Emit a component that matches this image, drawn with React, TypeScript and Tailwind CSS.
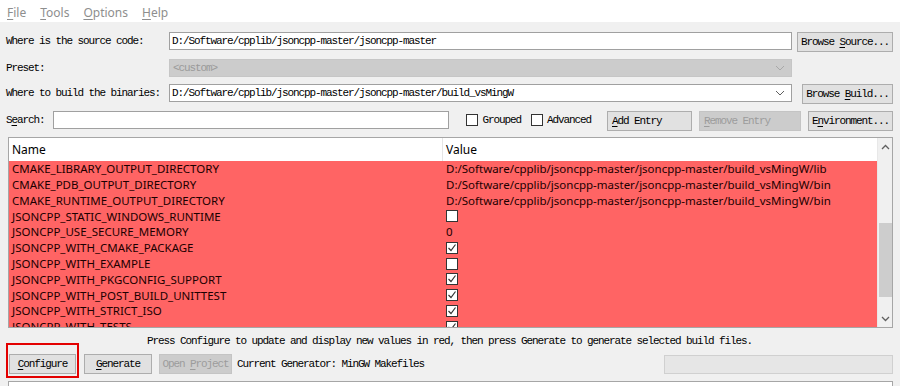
import React from "react";

const mono = "font-['Liberation_Mono',monospace] text-[11px] tracking-[-1.1px] text-black";
const ui = "font-['Noto_Sans',sans-serif]";

function U({ children }: { children: React.ReactNode }) {
  return <span className="underline underline-offset-2">{children}</span>;
}

function Btn({ w, children, disabled, left }: { w: string; children: React.ReactNode; disabled?: boolean; left?: boolean }) {
  return (
    <div
      className={`${w} h-[20px] flex items-center ${left ? "justify-start pl-[4px]" : "justify-center"} border ${
        disabled ? "bg-[#cccccc] border-[#c4c4c4] text-[#9c9c9c]" : "bg-[#e1e1e1] border-[#adadad] text-black"
      } font-['Liberation_Mono',monospace] text-[11px] tracking-[-1.1px] whitespace-pre`}
    >
      <span>{children}</span>
    </div>
  );
}

function Chevron({ color = "#606060" }: { color?: string }) {
  return (
    <svg width="10" height="6" viewBox="0 0 10 6">
      <path d="M1 1 L5 5 L9 1" fill="none" stroke={color} strokeWidth="1" />
    </svg>
  );
}

function TableCheck({ checked }: { checked: boolean }) {
  return (
    <div className="w-[12px] h-[12px] bg-white border border-[#333] flex items-center justify-center">
      {checked && (
        <svg width="10" height="10" viewBox="0 0 10 10">
          <path d="M1.5 5 L4 7.5 L8.5 1.5" fill="none" stroke="#333" strokeWidth="1.2" />
        </svg>
      )}
    </div>
  );
}

type Row = { name: string; value?: string; check?: boolean };
const base = "D:/Software/cpplib/jsoncpp-master/jsoncpp-master/build_vsMingW";
const rows: Row[] = [
  { name: "CMAKE_LIBRARY_OUTPUT_DIRECTORY", value: base + "/lib" },
  { name: "CMAKE_PDB_OUTPUT_DIRECTORY", value: base + "/bin" },
  { name: "CMAKE_RUNTIME_OUTPUT_DIRECTORY", value: base + "/bin" },
  { name: "JSONCPP_STATIC_WINDOWS_RUNTIME", check: false },
  { name: "JSONCPP_USE_SECURE_MEMORY", value: "0" },
  { name: "JSONCPP_WITH_CMAKE_PACKAGE", check: true },
  { name: "JSONCPP_WITH_EXAMPLE", check: false },
  { name: "JSONCPP_WITH_PKGCONFIG_SUPPORT", check: true },
  { name: "JSONCPP_WITH_POST_BUILD_UNITTEST", check: true },
  { name: "JSONCPP_WITH_STRICT_ISO", check: true },
  { name: "JSONCPP_WITH_TESTS", check: true },
];

export default function App() {
  return (
    <div className="w-[900px] h-[386px] overflow-hidden bg-[#f0f0f0] flex flex-col">
      {/* Menu bar */}
      <div className={`h-[22px] shrink-0 bg-white flex items-center pt-[3px] pl-[7px] gap-[14px] text-[12px] text-[#8e8e8e] ${ui}`}>
        <span><U>F</U>ile</span>
        <span><U>T</U>ools</span>
        <span><U>O</U>ptions</span>
        <span><U>H</U>elp</span>
      </div>

      <div className="flex flex-col shrink-0 pl-[6px] pr-[7px]">
        {/* Row 1 */}
        <div className="mt-[10px] h-[20px] flex items-start">
          <div className={`w-[163px] h-[18px] flex items-center ${mono}`}>Where is the source code:</div>
          <div className={`w-[623px] h-[18px] bg-white border border-[#a0a0a0] flex items-center pl-[2px] ${mono}`}>
            D:/Software/cpplib/jsoncpp-master/jsoncpp-master
          </div>
          <div className="ml-[5px]">
            <Btn w="w-[96px]">Browse <U>S</U>ource...</Btn>
          </div>
        </div>

        {/* Row 2 */}
        <div className="mt-[7px] h-[18px] flex items-start">
          <div className={`w-[163px] h-[18px] flex items-center ${mono}`}>Preset:</div>
          <div className="w-[623px] h-[18px] bg-[#cccccc] border border-[#c6c6c6] flex items-center justify-between pl-[3px] pr-[6px] font-['Liberation_Mono',monospace] text-[11px] tracking-[-1.1px] text-[#9a9a9a]">
            <span>&lt;custom&gt;</span>
            <Chevron color="#a8a8a8" />
          </div>
        </div>

        {/* Row 3 */}
        <div className="mt-[7px] h-[20px] flex items-start">
          <div className={`w-[163px] h-[18px] flex items-center ${mono}`}>Where to build the binaries:</div>
          <div className={`w-[623px] h-[18px] bg-white border border-[#a0a0a0] flex items-center justify-between pl-[2px] pr-[6px] ${mono}`}>
            <span>D:/Software/cpplib/jsoncpp-master/jsoncpp-master/build_vsMingW</span>
            <Chevron />
          </div>
          <div className="ml-[10px]">
            <Btn w="w-[91px]">Browse <U>B</U>uild...</Btn>
          </div>
        </div>

        {/* Row 4 */}
        <div className="mt-[7px] h-[19px] flex items-start">
          <div className={`w-[47px] h-[18px] flex items-center whitespace-pre ${mono}`}><span>S<U>e</U>arch:</span></div>
          <div className="w-[399px] h-[18px] bg-white border border-[#a0a0a0]" />
          <div className={`ml-[17px] h-[18px] flex items-center gap-[4px] ${mono}`}>
            <div className="w-[12px] h-[12px] bg-white border border-[#333]" />
            <span>Grouped</span>
          </div>
          <div className={`ml-[10px] h-[18px] flex items-center gap-[4px] ${mono}`}>
            <div className="w-[12px] h-[12px] bg-white border border-[#333]" />
            <span>Advanced</span>
          </div>
          <div className="ml-[16px]">
            <Btn w="w-[85px]" left><U>A</U>dd Entry</Btn>
          </div>
          <div className="ml-[7px]">
            <Btn w="w-[102px]" disabled left><U>R</U>emove Entry</Btn>
          </div>
          <div className="ml-[7px]">
            <Btn w="w-[85px]">E<U>n</U>vironment...</Btn>
          </div>
        </div>

        {/* Table */}
        <div className="mt-[7px] ml-[2px] w-[885px] h-[191px] border border-[#a6a6a6] bg-white flex overflow-hidden">
          <div className={`flex-1 flex flex-col overflow-hidden ${ui}`}>
            <div className="h-[23px] flex items-center bg-white text-[12px] text-black shrink-0">
              <div className="w-[434px] pl-[3px] border-r border-[#e5e5e5] h-full flex items-center">Name</div>
              <div className="pl-[3px]">Value</div>
            </div>
            <div className="flex-1 bg-[#ff6464] flex flex-col">
              {rows.map((r) => (
                <div key={r.name} className="h-[15.8px] shrink-0 flex items-center text-[11.5px] text-[#1c0000] leading-none">
                  <div className="w-[434px] pl-[3px] whitespace-nowrap">{r.name}</div>
                  <div className="pl-[3px] whitespace-nowrap">
                    {r.value !== undefined ? r.value : <TableCheck checked={!!r.check} />}
                  </div>
                </div>
              ))}
            </div>
          </div>
          <div className="w-[15px] bg-[#f0f0f0] border-l border-[#e8e8e8] flex flex-col items-center">
            <div className="h-[17px] flex items-center justify-center">
              <svg width="9" height="6" viewBox="0 0 9 6"><path d="M1 5 L4.5 1.5 L8 5" fill="none" stroke="#606060" strokeWidth="1.3" /></svg>
            </div>
            <div className="h-[68px]" />
            <div className="w-[13px] h-[74px] bg-[#cdcdcd]" />
            <div className="flex-1" />
            <div className="h-[17px] flex items-center justify-center">
              <svg width="9" height="6" viewBox="0 0 9 6"><path d="M1 1 L4.5 4.5 L8 1" fill="none" stroke="#606060" strokeWidth="1.3" /></svg>
            </div>
          </div>
        </div>

        {/* Status */}
        <div className={`h-[26px] flex items-center justify-center ${mono}`}>
          Press Configure to update and display new values in red, then press Generate to generate selected build files.
        </div>

        {/* Bottom buttons */}
        <div className="h-[20px] flex items-center">
          <div className="relative ml-[3px]">
            <Btn w="w-[67px]"><U>C</U>onfigure</Btn>
            <div className="absolute left-[-3px] top-[-11px] w-[73px] h-[35px] border-2 border-[#e30000]" />
          </div>
          <div className="ml-[8px]">
            <Btn w="w-[68px]"><U>G</U>enerate</Btn>
          </div>
          <div className="ml-[7px]">
            <Btn w="w-[73px]" disabled>Open <U>P</U>roject</Btn>
          </div>
          <div className={`ml-[5px] ${mono}`}>Current Generator: MinGW Makefiles</div>
          <div className="flex-1" />
          <div className="w-[229px] h-[19px] bg-[#e6e6e6] border border-[#d0d0d0]" />
        </div>

        {/* Output panel */}
        <div className="mt-[7px] ml-[2px] w-[885px] h-[20px] bg-white border border-[#a6a6a6]" />
      </div>
    </div>
  );
}
